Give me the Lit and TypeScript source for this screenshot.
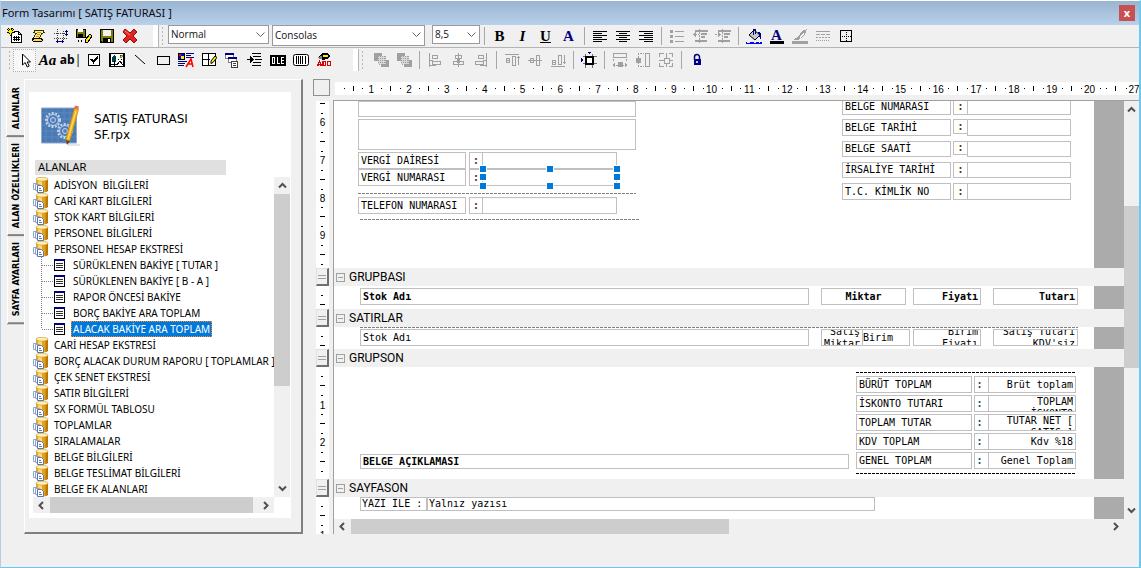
import { LitElement, html, svg, css, SVGTemplateResult } from "lit";
import { customElement, property, state } from "lit/decorators.js";
import { classMap } from "lit/directives/class-map.js";
import { styleMap } from "lit/directives/style-map.js";

const G = "#a0a0a0";
const NAVY = "#000080";

const ICONS: Record<string, SVGTemplateResult> = {
  new: svg`<path d="M4.500 3.500h7l3 3v8h-10z" fill="#fff" stroke="#000"/><path d="M11.500 3v3.500h3" fill="none" stroke="#000"/><path d="M6 9.500h7M6 11.500h7M7.500 8v5M9.500 8v5M11.500 8v5" stroke="#000"/><path d="M3.500 0v8M0 3.500h8M1 1l5 5M6 1L1 6" stroke="#000" stroke-width="2"/><path d="M3.500 0v7M0 3.500h7M1 1l5 5M6 1L1 6" stroke="#ffe600"/>`,
  open: svg`<path d="M5 2.500h8l1 2-2 1-3 5H3l3-5-2-1z" fill="#ffe98a" stroke="#303000"/><path d="M3.500 10.500h8l1 2-1 1h-8l-1-1z" fill="#ffd94a" stroke="#000"/><path d="M7 4.500h4M7 6.500h3M6 8.500h3" stroke="#c8a000"/>`,
  size: svg`<path d="M4.500 1v14M10.500 3v10M1 5.500h12M1 10.500h14" stroke="#404040" stroke-dasharray="1 1"/><path d="M13.500 2v6M3 13.500h8" stroke="${NAVY}"/><path d="M12 3h3v1h-3zM12 6h3v1h-3zM4 12h1v3H4zM9 12h1v3H9z" fill="${NAVY}"/>`,
  saveAs: svg`<path d="M0 1h9v8H0z" fill="#808000" stroke="#000"/><path d="M2 1h5v3H2z" fill="#fff"/><path d="M2 6h5v3H2z" fill="#000"/><path d="M14 6l-5 6v3l3-1 4-6z" fill="#ffe600" stroke="#000"/><path d="M2 13h1M5 13h1" stroke="#000" stroke-width="2"/>`,
  save: svg`<path d="M1.500 1.500h13v13h-12l-1-1z" fill="#808000" stroke="#000" stroke-width="1.500"/><path d="M4 2h8v6H4z" fill="#f0f0f0"/><path d="M4 10h8v5H4z" fill="#000"/><path d="M9 11h2v3H9z" fill="#fff"/>`,
  del: svg`<path d="M3 1l5 4 4-4 3 3-4 4 4 4-3 3-4-4-4 4-3-3 4-4-4-4z" fill="#e02424" stroke="#a00808" shape-rendering="auto"/><path d="M3 3l5 4" stroke="#ff8a80" shape-rendering="auto"/>`,
  alignL: svg`<path d="M1 3.500h14M1 5.500h9M1 7.500h14M1 9.500h9M1 11.500h14M1 13.500h9" stroke="#000"/>`,
  alignC: svg`<path d="M1 3.500h14M4 5.500h8M1 7.500h14M4 9.500h8M1 11.500h14M4 13.500h8" stroke="#000"/>`,
  alignR: svg`<path d="M1 3.500h14M6 5.500h9M1 7.500h14M6 9.500h9M1 11.500h14M6 13.500h9" stroke="#000"/>`,
  bullets: svg`<path d="M1 2h3v3H1zM1 7h3v3H1zM1 12h3v3H1z" fill="${G}"/><path d="M6 3.500h9M6 8.500h9M6 13.500h9" stroke="${G}"/>`,
  outdent: svg`<path d="M3 3h13M9 6h6M9 9h4M3 13h12" stroke="${G}" stroke-width="2"/><path d="M3 6.500h4M7.500 1v15" stroke="${G}" stroke-dasharray="2 1"/><path d="M4 4v5L1 6.500z" fill="${G}"/>`,
  indent: svg`<path d="M3 3h13M9 6h6M9 9h4M3 13h12" stroke="${G}" stroke-width="2"/><path d="M0 6.500h4M7.500 1v15" stroke="${G}" stroke-dasharray="2 1"/><path d="M3 4v5l3-2.500z" fill="${G}"/>`,
  fill: svg`<path d="M3 7l5-5 6 5-5 5z" fill="#c8c8c8" stroke="#000" shape-rendering="auto"/><path d="M7.500 7V1.500h2V6" fill="none" stroke="${NAVY}"/><path d="M12 4l3 1v7l-2-4z" fill="${NAVY}"/><path d="M0 15h16" stroke="#0000ff" stroke-width="2"/><path d="M1 14.500h3M8 14.500h2M13 14.500h1" stroke="#f0f0f0"/>`,
  fore: svg`<path d="M1 14.500h14" stroke="#000" stroke-width="3"/>`,
  pen: svg`<path d="M15 1l-5 2-4 6-3 1-2 2h5l3-2 4-4z" fill="${G}"/><path d="M7 9l4-4 1 1-4 4z" fill="#fff"/><path d="M0 14h16" stroke="${G}" stroke-width="3"/>`,
  lines: svg`<path d="M1 3.500h14" stroke="${G}"/><path d="M1 6.500h14" stroke="${G}" stroke-dasharray="4 1"/><path d="M1 9.500h14" stroke="${G}" stroke-dasharray="2 1"/><path d="M1 12.500h14" stroke="${G}" stroke-dasharray="1 1"/>`,
  border: svg`<path d="M2.500 2.500h11v11h-11z" fill="none" stroke="#000"/><path d="M8.500 4v9M4 8.500h9" stroke="#000" stroke-dasharray="1 1"/>`,
  pointer: svg`<path d="M5.500 2v11l2.700-2.500 2 4.500 2-1-2-4h3.300z" fill="#fff" stroke="#000" shape-rendering="auto"/>`,
  check: svg`<path d="M2.500 2.500h11v11h-11z" fill="#fff" stroke="#000"/><path d="M5 7l2.500 3L12 4.500" fill="none" stroke="#000" stroke-width="2"/>`,
  image: svg`<path d="M1 1.500h14v13H1z" fill="#fff" stroke="#000" stroke-width="1.500"/><path d="M5 3l2 2v5H3V5z" fill="#004040"/><path d="M5 9v5M2 12.500h6" stroke="#000"/><path d="M11 3h2v2h-2z" fill="#ffe600" stroke="#000" stroke-width=".5"/><path d="M8 13l3-4 3 4M9 7h1M12 7h1" fill="none" stroke="#000"/>`,
  line: svg`<path d="M3 3l10 9" stroke="#000" shape-rendering="auto"/>`,
  rect: svg`<path d="M2.500 4.500h12v8h-12z" fill="none" stroke="#000"/>`,
  rich: svg`<path d="M.5 1.500h6v6h-6z" fill="#00f" stroke="#000"/><path d="M1 2h2v2H1z" fill="#f00"/><path d="M3 4h3v3H3z" fill="#ffe600"/><path d="M8 1.500h8M8 3.500h5M8 5.500h8M0 9.500h9M0 11.500h7M0 13.500h6" stroke="${NAVY}"/><path d="M8 15l5-8 2 8M10 12h5" fill="none" stroke="#f00" stroke-width="1.500" shape-rendering="auto"/>`,
  sub: svg`<path d="M1.500 1.500h13v12h-13z" fill="#fff" stroke="#000" stroke-width="1.500"/><path d="M1 7.500h8M7.500 1v13" stroke="#000"/><path d="M14 4l-4 5v2.500l2-1 4-5z" fill="#ffe600" stroke="#000" shape-rendering="auto"/>`,
  pages: svg`<path d="M1.500 1.500h8v5h-8z" fill="#fff" stroke="#808080"/><path d="M1 2h9" stroke="${NAVY}" stroke-width="2"/><path d="M4.500 5.500h8v5h-8z" fill="#fff" stroke="#808080"/><path d="M4 6h9" stroke="${NAVY}" stroke-width="2"/><path d="M7.500 9.500h6v6h-6z" fill="#fff" stroke="#404040"/><path d="M9 11.500h3M9 13.500h3" stroke="#404040"/>`,
  brk: svg`<path d="M5 1.500h9M6 4.500h8M8 7.500h7M6 10.500h8M5 13.500h9" stroke="#000"/><path d="M0 7.500h4" stroke="#000"/><path d="M3 4v7l4-3.500z" fill="#000"/>`,
  ole: svg`<rect x="0" y="3" width="16" height="11" rx="1" fill="#000"/><path d="M2.500 5.500h2v6h-2zM7.500 5v6.500h2M14 5.500h-2.500v6H14M12 8.500h2" fill="none" stroke="#fff"/>`,
  bar: svg`<rect x=".5" y="2.500" width="15" height="11" rx="2" fill="#fff" stroke="#000" shape-rendering="auto"/><path d="M3.500 4v8M5.500 4v8M7.500 4v8M9.500 4v8M12.500 4v8" stroke="#000"/>`,
  ado: svg`<path d="M3 4l3-3h6l2 3-2 3-6 1z" fill="#000"/><path d="M7 2.500h5V5H7z" fill="#ffe600"/><path d="M2 5l4-1v3H3z" fill="#808080"/><path d="M1.500 14l2-4.500 2 4.500M2.500 12.500h2M7 9.500h2.500v4H7zM11.500 9.500h3v4h-3z" fill="none" stroke="#e00000" stroke-width="1.500"/>`,
  back: svg`<path d="M1 1h8v8H1zM9 8h7v7H8v-5z" fill="${G}"/><path d="M5 4h8v8H5z" fill="#d8d8d8"/><path d="M5 4.500h8M5 6.500h8M5 8.500h8M5 10.500h8" stroke="${G}" stroke-dasharray="1 1"/><path d="M5.500 4v8h7V4z" fill="none" stroke="${G}" stroke-dasharray="1 1"/>`,
  aL: svg`<path d="M2.500 1v14M5.500 3.500h5v3h-5zM5.500 9.500h8v3h-8z" fill="none" stroke="${G}"/><path d="M3 8.500h3M3 13.500h6" stroke="${G}"/>`,
  aC: svg`<path d="M8.500 1v14M5.500 3.500h6v3h-6zM3.500 9.500h10v3h-10z" fill="none" stroke="${G}"/><path d="M7 6h3v5H7z" fill="${G}"/>`,
  aR: svg`<path d="M13.500 1v14M5.500 3.500h5v3h-5zM2.500 9.500h8v3h-8z" fill="none" stroke="${G}"/><path d="M10 8.500h3M7 13.500h6" stroke="${G}"/>`,
  aT: svg`<path d="M1 2.500h14M2.500 6.500v4h3v-4zM8.500 4.500v9h3v-9zM14.500 4v9M13 5.500h3" fill="none" stroke="${G}"/><path d="M2 8.500h4" stroke="${G}"/>`,
  aM: svg`<path d="M1 8.500h14M3.500 6.500v4h3v-4zM9.500 3.500v10h3v-10z" fill="none" stroke="${G}"/>`,
  aB: svg`<path d="M1 14.500h14M2.500 8.500v4h3v-4zM8.500 3.500v9h3v-9zM14.500 3v9M13 10.500h3" fill="none" stroke="${G}"/><path d="M2 10.500h4" stroke="${G}"/>`,
  grid: svg`<path d="M4.500 2v14M11.500 2v14M2 4.500h14M2 11.500h14" stroke="#707070"/><path d="M5 5h7v7H5z" fill="#fff" stroke="#000" stroke-width="1.500"/><path d="M6 0h4L8 2zM0 6v4l2-2z" fill="${NAVY}"/>`,
  sW: svg`<path d="M1.500 1.500h13v4h-13z" fill="none" stroke="${G}"/><path d="M1.500 7v3M14.500 7v3M1 13h14" stroke="${G}" stroke-dasharray="2 1"/><path d="M6 10h5v5H6zM3 11v4l-3-2zM13 11v4l3-2z" fill="${G}"/>`,
  sH: svg`<path d="M10.500 1.500h4v13h-4z" fill="none" stroke="${G}"/><path d="M5 1.500h4M5 14.500h4M3 1v14" stroke="${G}" stroke-dasharray="2 1"/><path d="M1 6h5v5H1z" fill="${G}"/>`,
  sB: svg`<path d="M1.500 5V1.500H6M11 1.500h3.500V5M14.500 11v3.500H11M6 14.500H1.500V11M6 6h5v5H6zM8.500 1v5M8.500 11v4M1 8.500h5M11 8.500h4" fill="none" stroke="${G}"/>`,
  lock: svg`<path d="M5.500 8V5a2.500 2.500 0 0 1 5 0v3" fill="none" stroke="${NAVY}" stroke-width="1.500" shape-rendering="auto"/><path d="M4.500 7h7v6h-7z" fill="${NAVY}"/><path d="M7 9h2v2H7z" fill="#c0c0ff"/>`,
};

const icon = (name: string) =>
  html`<svg class="icon" width="16" height="16" viewBox="0 0 16 16" shape-rendering="crispEdges" aria-hidden="true">${ICONS[name]}</svg>`;

const shared = css`
  * { box-sizing: border-box; }
  button { font: inherit; color: inherit; border: 0; padding: 0; margin: 0; background: none; }
`;

@customElement("scroll-bar")
class ScrollBar extends LitElement {
  @property() dir = "v";
  @property({ type: Number }) start = 0;
  @property({ type: Number }) size = 50;
  static styles = [shared, css`
    :host { display: flex; background: #f0f0f0; min-width: 0; min-height: 0; }
    .bar { display: flex; flex: 1; min-width: 0; min-height: 0; }
    .bar.v { flex-direction: column; }
    .arrow { flex: 0 0 17px; display: flex; align-items: center; justify-content: center; }
    .track { flex: 1; display: flex; min-width: 0; min-height: 0; }
    .bar.v .track { flex-direction: column; }
    .thumb { background: #cdcdcd; }
  `];
  render() {
    const v = this.dir === "v";
    const arrow = (d: string, label: string) => html`<button class="arrow" aria-label=${label}>
      <svg width="9" height="9" viewBox="0 0 9 9"><path d=${d} fill="none" stroke="#505050" stroke-width="2"/></svg></button>`;
    return html`<div class="bar ${v ? "v" : "h"}">
      ${v ? arrow("M1 6.500l3.500-3.500L8 6.500", "Yukarı") : arrow("M6 1L2.500 4.500 6 8", "Sola")}
      <div class="track">
        <div style=${styleMap({ flex: `0 0 ${this.start}%` })}></div>
        <div class="thumb" style=${styleMap({ flex: `0 0 ${this.size}%` })}></div>
      </div>
      ${v ? arrow("M1 2.500L4.500 6 8 2.500", "Aşağı") : arrow("M3 1l3.500 3.500L3 8", "Sağa")}
    </div>`;
  }
}

@customElement("tool-bars")
class ToolBars extends LitElement {
  static styles = [shared, css`
    :host { display: block; }
    .row { display: flex; align-items: center; height: 24px; }
    .row.first { height: 23px; border-bottom: 1px solid #b4b4b4; align-items: flex-start; }
    .first .tool, .first .sep { height: 22px; }
    .tool { flex: 0 0 23px; height: 23px; display: flex; align-items: center; justify-content: center; position: relative; }
    .tool.on { background: #f8f8f8; border: 1px dotted #b0b0b0; }
    .icon { display: block; }
    .sep { flex: 0 0 8px; height: 23px; display: flex; justify-content: center; align-items: center; }
    .sep::before { content: ""; width: 1px; height: 18px; background: #a8a8a8; }
    .grip { flex: 0 0 7px; height: 20px; background: radial-gradient(circle at 50% 50%, #b8b8b8 1px, transparent 1px) 0 0 / 7px 4px; }
    .pad { padding-left: 3px; }
    .edge { flex: 0 0 6px; height: 22px; background: #fff; border-right: 1px solid #b4b4b4; }
    .group { display: flex; align-items: center; }
    .lead { padding-left: 2px; }
    .lead2 { padding-left: 5px; }
    .gap12 { padding-left: 12px; }
    .gap18 { padding-left: 18px; }
    .pick { position: relative; display: flex; height: 19px; }
    .pick select { appearance: none; width: 100%; border: 1px solid #9a9a9a; border-radius: 0; background: #fff; padding: 0 16px 2px 2px; margin: 0; font: 10px/14px "Open Sans", sans-serif; color: #111; }
    .pick svg { position: absolute; right: 4px; top: 7px; pointer-events: none; }
    .pick.style { width: 101px; }
    .pick.font { width: 153px; height: 21px; }
    .pick.size { width: 48px; }
    .combos { display: flex; gap: 3px; padding: 0 0 0 2px; }
    .combos .size { margin-left: 4px; }
    .serif { font: bold 15px/16px "Liberation Serif", serif; }
    .fore { font: bold 15px/12px "Liberation Serif", serif; color: #000080; height: 14px; position: absolute; }
    .i { font-style: italic; }
    .u { text-decoration: underline; }
    .navy { color: #000080; }
    .ab { font: bold 12px/16px "Open Sans", sans-serif; }
    .caret { font-weight: 400; }
  `];
  private t(name: string, label = name) {
    return html`<button class="tool" aria-label=${label}>${icon(name)}</button>`;
  }
  private pick(cls: string, label: string, value: string) {
    return html`<div class="pick ${cls}"><select aria-label=${label}><option>${value}</option></select>
      <svg width="9" height="6" viewBox="0 0 9 6"><path d="M.5 .5l4 4 4-4" fill="none" stroke="#606060"/></svg></div>`;
  }
  render() {
    const sep = html`<span class="sep"></span>`;
    return html`
      <div class="row first">
        <div class="group lead">${["new", "open", "size", "saveAs", "save", "del"].map((n) => this.t(n))}</div>
        <div class="group gap12"><span class="edge"></span><span class="grip"></span></div>
        <div class="combos">
          ${this.pick("style", "Stil", "Normal")}
          ${this.pick("font", "Yazı tipi", "Consolas")}
          ${this.pick("size", "Boyut", "8,5")}
        </div>
        <div class="group">
          ${sep}
          <button class="tool serif" aria-label="Kalın">B</button>
          <button class="tool serif i" aria-label="İtalik">I</button>
          <button class="tool serif u" aria-label="Altı çizili">U</button>
          <button class="tool serif navy" aria-label="Yazı">A</button>
          ${sep}${["alignL", "alignC", "alignR"].map((n) => this.t(n))}
          ${sep}${["bullets", "outdent", "indent"].map((n) => this.t(n))}
          ${sep}${this.t("fill")}
          <button class="tool" aria-label="Yazı rengi">${icon("fore")}<span class="fore">A</span></button>
          ${["pen", "lines", "border"].map((n) => this.t(n))}
        </div>
      </div>
      <div class="row">
        <div class="group lead2"><span class="grip"></span>
          <button class="tool on" aria-label="Seç">${icon("pointer")}</button></div>
        <div class="group">
          <button class="tool serif i" aria-label="Etiket">Aa</button>
          <button class="tool ab" aria-label="Metin kutusu">ab<span class="caret">|</span></button>
          ${["check", "image", "line", "rect", "rich", "sub", "pages", "brk", "ole", "bar", "ado"].map((n) => this.t(n))}
        </div>
        <div class="group gap18"><span class="edge"></span><span class="grip"></span></div>
        <div class="group pad">
          ${this.t("back", "Arkaya gönder")}${this.t("back", "Öne getir")}
          ${sep}${["aL", "aC", "aR"].map((n) => this.t(n))}
          ${sep}${["aT", "aM", "aB"].map((n) => this.t(n))}
          ${sep}${this.t("grid")}
          ${sep}${["sW", "sH", "sB"].map((n) => this.t(n))}
          ${sep}${this.t("lock")}
        </div>
      </div>`;
  }
}

const TREE: { text: string; child?: boolean }[] = [
  { text: "ADİSYON  BİLGİLERİ" },
  { text: "CARİ KART BİLGİLERİ" },
  { text: "STOK KART BİLGİLERİ" },
  { text: "PERSONEL BİLGİLERİ" },
  { text: "PERSONEL HESAP EKSTRESİ" },
  { text: "SÜRÜKLENEN BAKİYE [ TUTAR ]", child: true },
  { text: "SÜRÜKLENEN BAKİYE [ B - A ]", child: true },
  { text: "RAPOR ÖNCESİ BAKİYE", child: true },
  { text: "BORÇ BAKİYE ARA TOPLAM", child: true },
  { text: "ALACAK BAKİYE ARA TOPLAM", child: true },
  { text: "CARİ HESAP EKSTRESİ" },
  { text: "BORÇ ALACAK DURUM RAPORU [ TOPLAMLAR ]" },
  { text: "ÇEK SENET EKSTRESİ" },
  { text: "SATIR BİLGİLERİ" },
  { text: "SX FORMÜL TABLOSU" },
  { text: "TOPLAMLAR" },
  { text: "SIRALAMALAR" },
  { text: "BELGE BİLGİLERİ" },
  { text: "BELGE TESLİMAT BİLGİLERİ" },
  { text: "BELGE EK ALANLARI" },
];

@customElement("field-panel")
class FieldPanel extends LitElement {
  @state() private selected = 9;
  @state() private tab = 0;
  static styles = [shared, css`
    :host { display: flex; }
    .tabs { display: flex; flex-direction: column; width: 18px; }
    .tab { writing-mode: vertical-rl; transform: rotate(180deg); font: bold 9px/16px "DejaVu Sans Condensed", "DejaVu Sans", sans-serif; font-stretch: condensed; color: #000; padding: 6px 0; border-top: 2px solid #808080; border-right: 1px solid #fff; white-space: nowrap; text-align: left; width: 18px; }
    .tab.on { padding: 6px 0 8px; }
    .tab:not(.on) { width: 17px; margin-left: 1px; }
    .panel { flex: 1; min-width: 0; border: solid; border-width: 1px 2px 2px 1px; border-color: #fff #808080 #808080 #fff; padding: 12px 10px 14px 4px; }
    .sheet { background: #fff; padding: 12px 1px 5px 4px; display: flex; flex-direction: column; }
    .head { display: flex; gap: 13px; padding: 0 0 12px 8px; }
    .head p { margin: 0; font: 12px/16px "DejaVu Sans", sans-serif; }
    .names { padding-top: 7px; }
    .cap { background: #e0e0e0; margin: 0 64px 2px 2px; padding-left: 3px; font: 11px/15px Roboto, sans-serif; height: 15px; }
    .view { display: grid; grid-template-columns: 1fr 16px; grid-template-rows: auto 16px; }
    .tree { list-style: none; margin: 0; overflow: hidden; min-width: 0; }
    .tree { padding: 0; }
    .node { height: 16px; display: flex; align-items: center; white-space: pre; font: 10px/14px "Noto Sans", sans-serif; }
    .node button { padding: 0 1px; height: 16px; white-space: pre; border: 1px solid transparent; }
    .parent svg { flex: 0 0 16px; margin-right: 3px; }
    .child { padding-left: 8px; }
    .child svg { flex: 0 0 27px; margin-right: 3px; }
    .node .sel { background: #0078d7; color: #fff; border: 1px dotted #ff8728; }
  `];
  private folder = html`<svg width="16" height="16" viewBox="0 0 16 16">
    <path d="M3 2v12q6 3.500 12 0V2z" fill="#e8a317"/><path d="M5 3v12l4 .800V3z" fill="#ffd76a"/><path d="M12.500 3v12.300l2.500-1.300V2z" fill="#b87808"/>
    <ellipse cx="9" cy="2.200" rx="6" ry="1.900" fill="#fff0b8" stroke="#c89020" stroke-width=".6"/>
    <path d="M.5 6.500h4v6h-4z" fill="#fff" stroke="#8ea4cc"/><path d="M2.500 7.500h4v6h-4z" fill="#fff" stroke="#8ea4cc"/><path d="M4.500 8.500h4l2 2v5h-6z" fill="#fff" stroke="#5878b0"/><path d="M6 11.500h2M6 13.500h3" stroke="#5878b0"/></svg>`;
  private leaf(last: boolean) {
    return html`<svg width="27" height="16" viewBox="0 0 27 16" shape-rendering="crispEdges">
      <path d="M.5 0V${last ? 8 : 16}M1 8.500h11" stroke="#808080" stroke-dasharray="1 1"/>
      <path d="M13.500 3.500h10v10h-10z" fill="#fff" stroke="#000"/><path d="M13 3h11" stroke="#000080" stroke-width="2"/><path d="M15 6.500h7M15 8.500h7M15 10.500h7" stroke="#303030"/></svg>`;
  }
  render() {
    return html`
      <div class="tabs" role="tablist">
        ${["ALANLAR", "ALAN ÖZELLİKLERİ", "SAYFA AYARLARI"].map((n, i) => html`
          <button class=${classMap({ tab: true, on: this.tab === i })} role="tab" @click=${() => (this.tab = i)}>${n}</button>`)}
      </div>
      <div class="panel"><div class="sheet">
        <div class="head">
          <svg width="40" height="44" viewBox="0 0 40 44">
            <path d="M.5 4h35v35H.5z" fill="#4a7ab5" stroke="#90aac8"/>
            <path d="M5 4v35M11 4v35M17 4v35M23 4v35M29 4v35M1 9h34M1 15h34M1 21h34M1 27h34M1 33h34" stroke="#6a92c4" stroke-width=".6"/>
            <circle cx="12" cy="16" r="7" fill="none" stroke="#c5d6ea" stroke-width="2" stroke-dasharray="2 1.500"/><circle cx="12" cy="16" r="5.500" fill="none" stroke="#c5d6ea"/><circle cx="12" cy="16" r="2.500" fill="none" stroke="#c5d6ea"/>
            <circle cx="24" cy="27" r="7" fill="none" stroke="#c5d6ea" stroke-width="2" stroke-dasharray="2 1.500"/><circle cx="24" cy="27" r="5.500" fill="none" stroke="#c5d6ea"/><circle cx="24" cy="27" r="2.500" fill="none" stroke="#c5d6ea"/>
            <path d="M27 41h12" stroke="#ccc"/><path d="M33.500 4l4 1.500L29 36l-3 4-1-5z" fill="#f5b51a" stroke="#c88408" stroke-width=".7"/><path d="M35 7l-8 28" stroke="#ffe27a"/><path d="M25 36l4 1-3 4z" fill="#5a4632"/><path d="M34 1.500l4 1-.8 3-4-1z" fill="#ef6a5a"/>
          </svg>
          <div class="names"><p>SATIŞ FATURASI</p><p>SF.rpx</p></div>
        </div>
        <div class="cap">ALANLAR</div>
        <div class="view">
          <ul class="tree">
            ${TREE.map((n, i) => html`<li class="node ${n.child ? "child" : "parent"}">
              ${n.child ? this.leaf(!TREE[i + 1]?.child) : this.folder}
              <button class=${classMap({ sel: this.selected === i })} @click=${() => (this.selected = i)}>${n.text}</button></li>`)}
          </ul>
          <scroll-bar dir="v" start="0" size="67"></scroll-bar>
          <scroll-bar dir="h" start="0" size="98"></scroll-bar>
        </div>
      </div></div>`;
  }
}

/** One item on the report canvas; x is measured from the canvas edge, y from the top of its band. */
interface Item {
  x: number; y: number; w: number; h: number;
  text?: string; kind?: string;
}
interface Band { title?: string; height: number; items: Item[]; marks: [number, string][]; }

const row = (y: number, h: number, label: string, ch = h): Item[] => [
  { x: 508, y, w: 109, h, text: label },
  { x: 619, y, w: 15, h: ch, text: ":", kind: "colon" },
  { x: 633, y, w: 104, h },
];
const left = (y: number, label: string): Item[] => [
  { x: 24, y, w: 108, h: 17, text: label },
  { x: 135, y, w: 14, h: 17, text: ":", kind: "colon" },
  { x: 148, y, w: 135, h: 17 },
];
const total = (y: number, label: string, value: string, kind = "right"): Item[] => [
  { x: 522, y, w: 116, h: 17, text: label },
  { x: 640, y, w: 15, h: 17, text: ":", kind: "colon plain" },
  { x: 654, y, w: 88, h: 17, text: value, kind },
];
const handles: Item[] = [[145, 64], [212, 64], [279, 64], [145, 72], [279, 72], [145, 81], [212, 81], [279, 81]]
  .map(([x, y]) => ({ x, y, w: 8, h: 8, kind: "handle" }));

const BANDS: Band[] = [
  {
    height: 167,
    items: [
      { x: 24, y: 0, w: 278, h: 16 },
      { x: 24, y: 18, w: 278, h: 31 },
      ...left(51, "VERGİ DAİRESİ"), ...left(68, "VERGİ NUMARASI"), ...left(96, "TELEFON NUMARASI"),
      { x: 24, y: 92, w: 278, h: 1, kind: "dash" },
      { x: 26, y: 118, w: 279, h: 1, kind: "dash" },
      ...row(-3, 17, "BELGE NUMARASI"), ...row(18, 17, "BELGE TARİHİ", 15), ...row(40, 16, "BELGE SAATİ", 14),
      ...row(61, 16, "İRSALİYE TARİHİ"), ...row(82, 17, "T.C. KİMLİK NO"),
      ...handles,
    ],
    marks: [[2, "-"], [12, "."], [21, "6"], [31, "."], [40, "-"], [50, "."], [59, "7"], [69, "."], [78, "-"], [88, "."], [97, "8"], [106, "."], [115, "-"], [125, "."], [134, "9"], [144, "."], [153, "-"], [163, "."]],
  },
  {
    title: "GRUPBASI", height: 23,
    items: [
      { x: 26, y: 2, w: 449, h: 17, text: "Stok Adı", kind: "bold" },
      { x: 487, y: 2, w: 85, h: 17, text: "Miktar", kind: "bold center" },
      { x: 579, y: 2, w: 68, h: 17, text: "Fiyatı", kind: "bold right" },
      { x: 659, y: 2, w: 85, h: 17, text: "Tutarı", kind: "bold right" },
    ],
    marks: [[9, "."], [18, "-"]],
  },
  {
    title: "SATIRLAR", height: 22,
    items: [
      { x: 26, y: 2, w: 449, h: 17, text: "Stok Adı" },
      { x: 487, y: 2, w: 42, h: 17, text: "Satış Miktar", kind: "right" },
      { x: 528, y: 2, w: 48, h: 17, text: "Birim", kind: "tight" },
      { x: 579, y: 2, w: 68, h: 17, text: "Birim Fiyatı", kind: "right" },
      { x: 659, y: 2, w: 85, h: 17, text: "Satış Tutarı KDV'siz", kind: "right" },
      { x: 26, y: 0, w: 718, h: 1, kind: "dash" },
    ],
    marks: [[9, "."], [18, "-"]],
  },
  {
    title: "GRUPSON", height: 112,
    items: [
      { x: 522, y: 5, w: 219, h: 1, kind: "dash dark" },
      ...total(9, "BÜRÜT TOPLAM", "Brüt toplam"),
      ...total(28, "İSKONTO TUTARI", "TOPLAM İSKONTO", "right top"),
      ...total(47, "TOPLAM TUTAR", "TUTAR NET [ SATIŞ ]", "right top"),
      ...total(66, "KDV TOPLAM", "Kdv %18"),
      ...total(85, "GENEL TOPLAM", "Genel Toplam"),
      { x: 522, y: 106, w: 219, h: 1, kind: "dash dark" },
      { x: 26, y: 87, w: 489, h: 15, text: "BELGE AÇIKLAMASI", kind: "bold" },
    ],
    marks: [[9, "."], [18, "-"], [28, "."], [38, "1"], [47, "."], [56, "-"], [66, "."], [75, "2"], [85, "."], [94, "-"], [104, "."]],
  },
  {
    title: "SAYFASON", height: 22,
    items: [
      { x: 26, y: 0, w: 67, h: 14, text: "YAZI İLE :", kind: "near" },
      { x: 93, y: 0, w: 448, h: 14, text: "Yalnız yazısı", kind: "near" },
    ],
    marks: [[9, "."], [18, "-"], [28, "."], [38, "1"]],
  },
];

@customElement("report-designer")
class ReportDesigner extends LitElement {
  static styles = [shared, css`
    :host { display: grid; grid-template-columns: 20px minmax(0, 1fr); grid-template-rows: 21px auto; }
    .corner { width: 17px; height: 17px; border: 1px solid #909090; background: #f0f0f0; }
    .hruler { background: #fff; height: 13px; margin: 3px 0 0 2px; overflow: hidden; }
    .hruler svg { display: block; }
    text { font: 10px "Liberation Sans", sans-serif; fill: #000; text-anchor: middle; }
    .vruler { display: flex; flex-direction: column; width: 13px; margin: 1px 0 0 3px; background: #fff; overflow: hidden; }
    .vruler svg { display: block; flex: none; }
    .size { flex: 0 0 18px; width: 13px; background: #f0f0f0; border: solid; border-width: 1px 2px 2px 1px; border-color: #e0e0e0 #707070 #707070 #e0e0e0; display: flex; flex-direction: column; justify-content: center; gap: 2px; align-items: center; }
    .size::before, .size::after { content: ""; width: 8px; height: 1px; background: #a0a0a0; }
    .area { display: grid; grid-template-columns: minmax(0, 1fr) 15px; grid-template-rows: auto 15px; border-top: 1px solid #a0a0a0; border-left: 1px solid #a0a0a0; }
    .bands { background: #ababab; min-width: 0; overflow: hidden; }
    .title { height: 18px; background: #f0f0f0; display: flex; align-items: center; gap: 4px; padding-left: 2px; font: 12px/18px Roboto, sans-serif; }
    .toggle { width: 9px; height: 9px; border: 1px solid #a0a0a0; display: flex; align-items: center; justify-content: center; }
    .toggle::before { content: ""; width: 5px; height: 1px; background: #a0a0a0; }
    .page { position: relative; background: #fff; overflow: hidden; margin-right: 30px; }
    .item { position: absolute; border: 1px solid #c0c0c0; overflow: hidden; padding: 0 2px; display: flex; align-items: center; font: 10px/12px "DejaVu Sans Mono", monospace; color: #000; }
    .bold { font-weight: bold; }
    .center { justify-content: center; }
    .right { justify-content: flex-end; text-align: right; padding: 0 2px 0 0; }
    .top { align-items: flex-start; }
    .near { padding: 0 1px; }
    .tight { padding: 0; }
    .colon { padding: 0; justify-content: center; color: #663000; font-weight: bold; }
    .plain { color: #205070; padding-right: 4px; }
    .dash { border: 0; background: repeating-linear-gradient(90deg, #808080 0 3px, transparent 3px 4px); }
    .dark { background: repeating-linear-gradient(90deg, #000 0 3px, transparent 3px 4px); }
    .handle { background: #0078d7; border-color: #fff; }
  `];
  private hruler() {
    const out = [];
    for (let n = 0; n <= 20; n++) {
      const x = n * 37.8 - 1.5;
      if (n) out.push(svg`<text x=${x} y="11">${n}</text>`);
      if (n) out.push(svg`<path d="M${Math.round(x - 9)} 6h1v1h-1z"/>`);
      out.push(svg`<path d="M${Math.round(x + 10)} 6h1v1h-1z"/>`);
      if (n < 20) out.push(svg`<path d="M${Math.round(x + 19)} 4h1v5h-1z"/>`);
    }
    return svg`${out}<path d="M771 6h1v1h-1zM780 4h1v5h-1zM791 6h1v1h-1z"/><text x="799" y="11">27</text>`;
  }
  private marks(b: Band) {
    return svg`${b.marks.map(([y, m]) =>
      m === "." ? svg`<path d="M5 ${y}h2v1h-2z"/>`
      : m === "-" ? svg`<path d="M4 ${y}h5v1h-5z"/>`
      : svg`<text x="6.500" y=${y + 4}>${m}</text>`)}`;
  }
  render() {
    return html`
      <div class="corner"></div>
      <div class="hruler"><svg width="805" height="13">${this.hruler()}</svg></div>
      <div class="vruler">
        ${BANDS.map((b) => html`
          ${b.title ? html`<button class="size" aria-label="${b.title} yüksekliği"></button>` : ""}
          <svg width="13" height=${b.title === "SAYFASON" ? 37 : b.height}>${this.marks(b)}</svg>`)}
      </div>
      <div class="area">
        <div class="bands">
          ${BANDS.map((b) => html`
            ${b.title ? html`<div class="title"><button class="toggle" aria-label="${b.title} daralt"></button>${b.title}</div>` : ""}
            <div class="page" style=${styleMap({ height: `${b.height}px` })}>
              ${b.items.map((i) => html`<div class="item ${i.kind ?? ""}"
                style=${styleMap({ left: `${i.x}px`, top: `${i.y}px`, width: `${i.w}px`, height: `${i.h}px` })}>${i.text ?? ""}</div>`)}
            </div>`)}
        </div>
        <scroll-bar dir="v" start="23" size="42"></scroll-bar>
        <scroll-bar dir="h" start="0" size="50"></scroll-bar>
      </div>`;
  }
}

@customElement("app-root")
class AppRoot extends LitElement {
  static styles = [shared, css`
    :host { display: block; }
    .window { min-height: 100vh; background: #f0f0f0; border: solid; border-width: 1px 2px 1px 1px; border-color: #fff #6cc8ec #6cc8ec #b4cde6; display: flex; flex-direction: column; }
    .bar { display: flex; align-items: center; justify-content: space-between; height: 24px; padding: 0 4px 0 1px; background: linear-gradient(#99b4d1, #b9d1ea); }
    .bar h1 { margin: 0; font: 11px/24px "Noto Sans", sans-serif; color: #0c0c18; }
    .close { width: 16px; height: 16px; background: #c75050; color: #fff; font: bold 11px/14px "Noto Sans", sans-serif; }
    .work { display: flex; gap: 10px; padding: 7px 0 0 5px; }
    field-panel { flex: 0 0 297px; align-self: flex-start; }
    report-designer { flex: 1; min-width: 0; }
  `];
  render() {
    return html`<main class="window">
      <header class="bar"><h1>Form Tasarımı [ SATIŞ FATURASI ]</h1><button class="close" aria-label="Kapat">x</button></header>
      <tool-bars></tool-bars>
      <div class="work"><field-panel></field-panel><report-designer></report-designer></div>
    </main>`;
  }
}
